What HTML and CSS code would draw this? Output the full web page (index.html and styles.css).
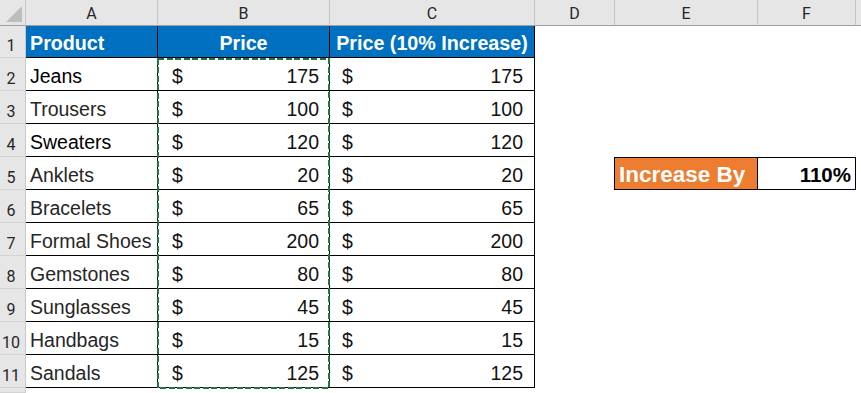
FILE: index.html
```html
<!DOCTYPE html>
<html>
<head>
<meta charset="utf-8">
<link rel="stylesheet" href="styles.css">
</head>
<body>
<div class="sheet">
  <div class="grid">
    <!-- header row -->
    <div class="corner"><svg class="tri" width="26" height="26" viewBox="0 0 26 26"><polygon points="22,6 22,22 6,22" fill="#bdbdbd"/></svg></div>
    <div class="ch">A</div>
    <div class="ch">B</div>
    <div class="ch">C</div>
    <div class="ch ch-d">D</div>
    <div class="ch ch-e">E</div>
    <div class="ch">F</div>
    <div class="ch ch-last"></div>

    <!-- row 1 -->
    <div class="rh">1</div>
    <div class="c hd left">Product</div>
    <div class="c hd center">Price</div>
    <div class="c hd center">Price (10% Increase)</div>
    <div class="e"></div><div class="e"></div><div class="e"></div><div class="e"></div>

    <!-- row 2 -->
    <div class="rh">2</div>
    <div class="c name dark">Jeans</div>
    <div class="c acc b"><span>$</span><span>175</span></div>
    <div class="c acc cc"><span>$</span><span>175</span></div>
    <div class="e"></div><div class="e"></div><div class="e"></div><div class="e"></div>

    <!-- row 3 -->
    <div class="rh">3</div>
    <div class="c name">Trousers</div>
    <div class="c acc b"><span>$</span><span>100</span></div>
    <div class="c acc cc"><span>$</span><span>100</span></div>
    <div class="e"></div><div class="e"></div><div class="e"></div><div class="e"></div>

    <!-- row 4 -->
    <div class="rh">4</div>
    <div class="c name dark">Sweaters</div>
    <div class="c acc b"><span>$</span><span>120</span></div>
    <div class="c acc cc"><span>$</span><span>120</span></div>
    <div class="e"></div><div class="e"></div><div class="e"></div><div class="e"></div>

    <!-- row 5 -->
    <div class="rh">5</div>
    <div class="c name">Anklets</div>
    <div class="c acc b"><span>$</span><span>20</span></div>
    <div class="c acc cc"><span>$</span><span>20</span></div>
    <div class="e"></div>
    <div class="inc-label">Increase By</div>
    <div class="inc-value">110%</div>
    <div class="e"></div>

    <!-- row 6 -->
    <div class="rh">6</div>
    <div class="c name">Bracelets</div>
    <div class="c acc b"><span>$</span><span>65</span></div>
    <div class="c acc cc"><span>$</span><span>65</span></div>
    <div class="e"></div><div class="e"></div><div class="e"></div><div class="e"></div>

    <!-- row 7 -->
    <div class="rh">7</div>
    <div class="c name">Formal Shoes</div>
    <div class="c acc b"><span>$</span><span>200</span></div>
    <div class="c acc cc"><span>$</span><span>200</span></div>
    <div class="e"></div><div class="e"></div><div class="e"></div><div class="e"></div>

    <!-- row 8 -->
    <div class="rh">8</div>
    <div class="c name">Gemstones</div>
    <div class="c acc b"><span>$</span><span>80</span></div>
    <div class="c acc cc"><span>$</span><span>80</span></div>
    <div class="e"></div><div class="e"></div><div class="e"></div><div class="e"></div>

    <!-- row 9 -->
    <div class="rh">9</div>
    <div class="c name">Sunglasses</div>
    <div class="c acc b"><span>$</span><span>45</span></div>
    <div class="c acc cc"><span>$</span><span>45</span></div>
    <div class="e"></div><div class="e"></div><div class="e"></div><div class="e"></div>

    <!-- row 10 -->
    <div class="rh">10</div>
    <div class="c name">Handbags</div>
    <div class="c acc b"><span>$</span><span>15</span></div>
    <div class="c acc cc"><span>$</span><span>15</span></div>
    <div class="e"></div><div class="e"></div><div class="e"></div><div class="e"></div>

    <!-- row 11 -->
    <div class="rh">11</div>
    <div class="c name">Sandals</div>
    <div class="c acc b"><span>$</span><span>125</span></div>
    <div class="c acc cc"><span>$</span><span>125</span></div>
    <div class="e"></div><div class="e"></div><div class="e"></div><div class="e"></div>

    <!-- row 12 (partial) -->
    <div class="rh"></div>
    <div class="e"></div><div class="e"></div><div class="e"></div><div class="e"></div><div class="e"></div><div class="e"></div><div class="e"></div>
  </div>
  <svg class="marquee" width="173" height="331" viewBox="0 0 173 331">
    <rect x="1" y="1" width="171" height="329" fill="none" stroke="#217346" stroke-width="2" stroke-dasharray="6 2.5" shape-rendering="crispEdges"/>
  </svg>
</div>
</body>
</html>
```

FILE: styles.css
```css
html, body {
  margin: 0;
  padding: 0;
  background: #ffffff;
}

.sheet {
  position: relative;
  width: 861px;
  height: 393px;
  overflow: hidden;
}

.grid {
  display: grid;
  grid-template-columns: 26px 132px 172px 205px 79px 144px 98px 1fr;
  grid-template-rows: 26px 32px repeat(10, 33px) 1fr;
  width: 861px;
  height: 393px;
  font-family: "Liberation Sans", Arial, sans-serif;
  font-size: 19.5px;
  color: #111;
}

.grid > div {
  box-sizing: border-box;
  min-width: 0;
}

/* column headers */
.corner {
  background: #e6e6e6;
  border-bottom: 1px solid #a0a0a0;
  border-right: 1px solid #c8c8c8;
  position: relative;
}
.tri {
  display: block;
}

.ch {
  background: #e6e6e6;
  border-bottom: 1px solid #a0a0a0;
  border-right: 1px solid #c4c4c4;
  font-family: Roboto, "Liberation Sans", sans-serif;
  font-size: 16px;
  color: #262626;
  display: flex;
  align-items: center;
  justify-content: center;
  padding-top: 1px;
}
.ch-d {
  border-right: none;
}
.ch-e {
  border-left: 1px solid #c4c4c4;
}
.ch-last {
  border-right: none;
}

/* row headers */
.rh {
  background: #e6e6e6;
  border-right: 1px solid #c8c8c8;
  border-bottom: 1px solid #d4d4d4;
  font-family: Roboto, "Liberation Sans", sans-serif;
  font-size: 16px;
  color: #262626;
  display: flex;
  align-items: flex-end;
  justify-content: center;
  padding-right: 3px;
  padding-bottom: 2px;
  line-height: 18px;
}

/* table cells */
.c {
  border-right: 1px solid #000;
  border-bottom: 1px solid #000;
  display: flex;
  align-items: flex-end;
  line-height: 22px;
  padding-bottom: 3px;
  white-space: nowrap;
}

.hd {
  background: #0070c0;
  color: #ffffff;
  font-weight: bold;
  font-size: 19.7px;
}
.left {
  padding-left: 4px;
}
.center {
  justify-content: center;
}

.name {
  padding-left: 4px;
  color: #262626;
}
.dark {
  color: #000;
}

.acc {
  justify-content: space-between;
  color: #111;
}
.acc.b {
  padding-left: 14px;
  padding-right: 10px;
}
.acc.cc {
  padding-left: 12px;
  padding-right: 11px;
}

.e {
  background: #fff;
}

/* increase by */
.inc-label {
  background: #ed7d31;
  color: #fff;
  font-weight: bold;
  font-size: 22.5px;
  border: 1px solid #000;
  display: flex;
  align-items: flex-end;
  padding-left: 4px;
  padding-bottom: 3px;
  line-height: 22px;
  white-space: nowrap;
}
.inc-value {
  border-top: 1px solid #000;
  border-bottom: 1px solid #000;
  border-right: 1px solid #000;
  font-weight: bold;
  font-size: 20.5px;
  color: #000;
  display: flex;
  align-items: flex-end;
  justify-content: flex-end;
  padding-right: 4px;
  padding-bottom: 3px;
  line-height: 22px;
}

/* copy marquee over column B */
.marquee {
  position: absolute;
  left: 157px;
  top: 58px;
  display: block;
}
```
